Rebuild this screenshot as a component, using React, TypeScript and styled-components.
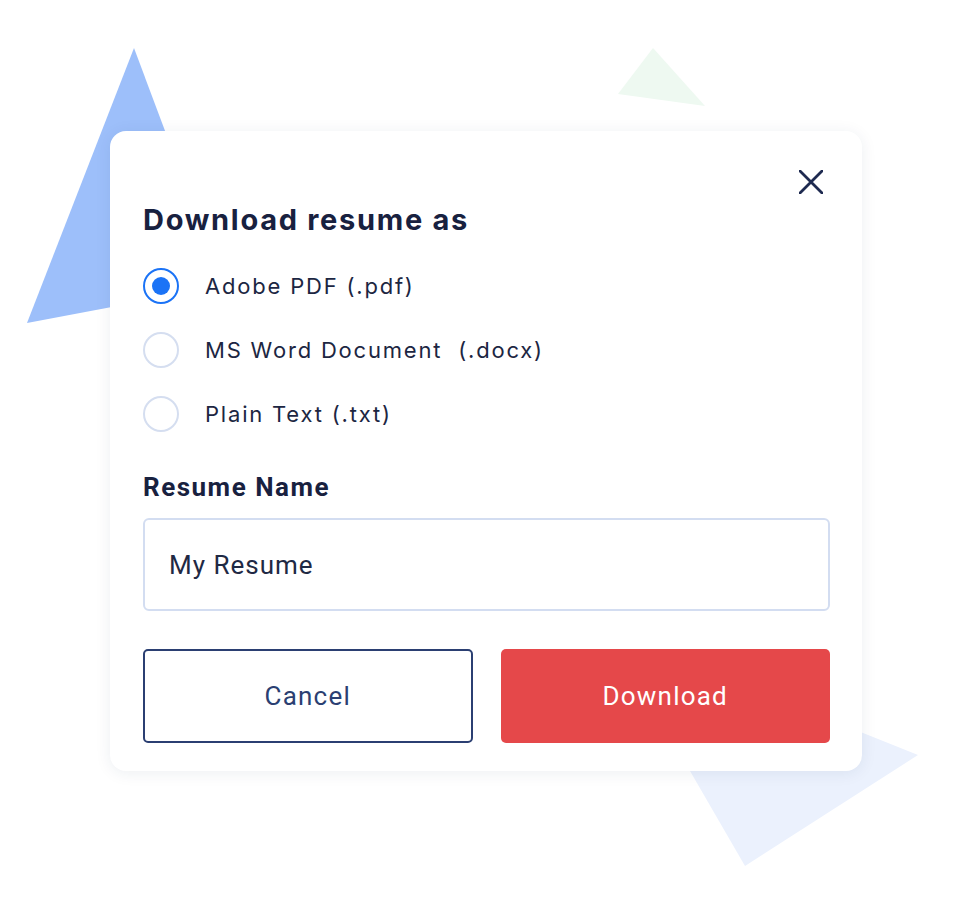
import { useState } from 'react';
import styled, { createGlobalStyle } from 'styled-components';

const GlobalStyle = createGlobalStyle`
  html, body {
    margin: 0;
    padding: 0;
    background: #ffffff;
  }
  * {
    box-sizing: border-box;
  }
`;

const Page = styled.div`
  position: relative;
  width: 973px;
  height: 901px;
  overflow: hidden;
  padding: 131px 0 0 110px;
`;

const Backdrop = styled.svg`
  position: absolute;
  left: 0;
  top: 0;
  width: 973px;
  height: 901px;
  pointer-events: none;
`;

const Card = styled.div`
  position: relative;
  width: 752px;
  height: 640px;
  background: #ffffff;
  border-radius: 16px;
  box-shadow: 0 2px 16px rgba(30, 50, 90, 0.08);
  padding: 40px 32px 0 33px;
  display: flex;
  flex-direction: column;
`;

const CloseRow = styled.div`
  display: flex;
  justify-content: flex-end;
  height: 22px;
  padding-right: 6px;
`;

const CloseButton = styled.button`
  width: 26px;
  height: 26px;
  margin-top: -2px;
  padding: 0;
  border: none;
  background: none;
  cursor: pointer;
  display: flex;
  align-items: center;
  justify-content: center;
`;

const Title = styled.h2`
  margin: 9px 0 0;
  font-family: Inter, 'Open Sans', sans-serif;
  font-weight: 700;
  font-size: 29px;
  line-height: 36px;
  color: #18213f;
  letter-spacing: 1.7px;
`;

const OptionList = styled.div`
  display: flex;
  flex-direction: column;
  gap: 28px;
  margin-top: 30px;
`;

const Option = styled.label`
  display: flex;
  align-items: center;
  gap: 26px;
  height: 36px;
  cursor: pointer;
  font-family: Inter, 'Open Sans', sans-serif;
  font-size: 22px;
  color: #1c2642;
  letter-spacing: 1.8px;
  white-space: pre;
`;

const Radio = styled.span<{ $checked: boolean }>`
  width: 36px;
  height: 36px;
  border-radius: 50%;
  border: ${(p) => (p.$checked ? '2px solid #1b73f6' : '2px solid #d5def0')};
  display: flex;
  align-items: center;
  justify-content: center;
  flex-shrink: 0;

  &::after {
    content: '';
    width: 18px;
    height: 18px;
    border-radius: 50%;
    background: #1b73f6;
    display: ${(p) => (p.$checked ? 'block' : 'none')};
  }
`;

const Label = styled.div`
  margin-top: 40px;
  font-family: Roboto, 'Liberation Sans', sans-serif;
  font-weight: 700;
  font-size: 26px;
  line-height: 30px;
  color: #18213f;
  letter-spacing: 1.5px;
`;

const NameInput = styled.input`
  margin-top: 16px;
  width: 100%;
  height: 93px;
  border: 2px solid #d3ddf1;
  border-radius: 6px;
  padding: 0 24px;
  font-family: Roboto, 'Liberation Sans', sans-serif;
  font-size: 26px;
  letter-spacing: 1px;
  color: #1f2944;
  outline: none;
`;

const Actions = styled.div`
  display: grid;
  grid-template-columns: 1fr 1fr;
  gap: 28px;
  margin-top: 38px;
`;

const ActionButton = styled.button<{ $primary?: boolean }>`
  height: 94px;
  border-radius: 5px;
  font-family: Roboto, 'Liberation Sans', sans-serif;
  font-size: 26px;
  letter-spacing: 1.2px;
  cursor: pointer;
  border: ${(p) => (p.$primary ? 'none' : '2px solid #2b3f72')};
  background: ${(p) => (p.$primary ? '#e5484a' : '#ffffff')};
  color: ${(p) => (p.$primary ? '#ffffff' : '#2b3f72')};
`;

const formats = [
  { id: 'pdf', text: 'Adobe PDF (.pdf)' },
  { id: 'docx', text: 'MS Word Document  (.docx)' },
  { id: 'txt', text: 'Plain Text (.txt)' },
];

export default function App() {
  const [format, setFormat] = useState('pdf');
  const [name, setName] = useState('My Resume');

  return (
    <>
      <GlobalStyle />
      <Page>
        <Backdrop viewBox="0 0 973 901">
          <polygon points="134,48 27,323 223,286" fill="#9dbffa" />
          <polygon points="653,48 618,94 705,106" fill="#eef9f1" />
          <polygon points="918,755 609,631 745,866" fill="#ebf1fd" />
        </Backdrop>
        <Card>
          <CloseRow>
            <CloseButton aria-label="Close">
              <svg width="24" height="24" viewBox="0 0 24 24">
                <path d="M1 1 L23 23 M23 1 L1 23" stroke="#1e2a50" strokeWidth="2.8" strokeLinecap="round" />
              </svg>
            </CloseButton>
          </CloseRow>
          <Title>Download resume as</Title>
          <OptionList>
            {formats.map((f) => (
              <Option key={f.id} onClick={() => setFormat(f.id)}>
                <Radio $checked={format === f.id} />
                {f.text}
              </Option>
            ))}
          </OptionList>
          <Label>Resume Name</Label>
          <NameInput value={name} onChange={(e) => setName(e.target.value)} />
          <Actions>
            <ActionButton>Cancel</ActionButton>
            <ActionButton $primary>Download</ActionButton>
          </Actions>
        </Card>
      </Page>
    </>
  );
}
